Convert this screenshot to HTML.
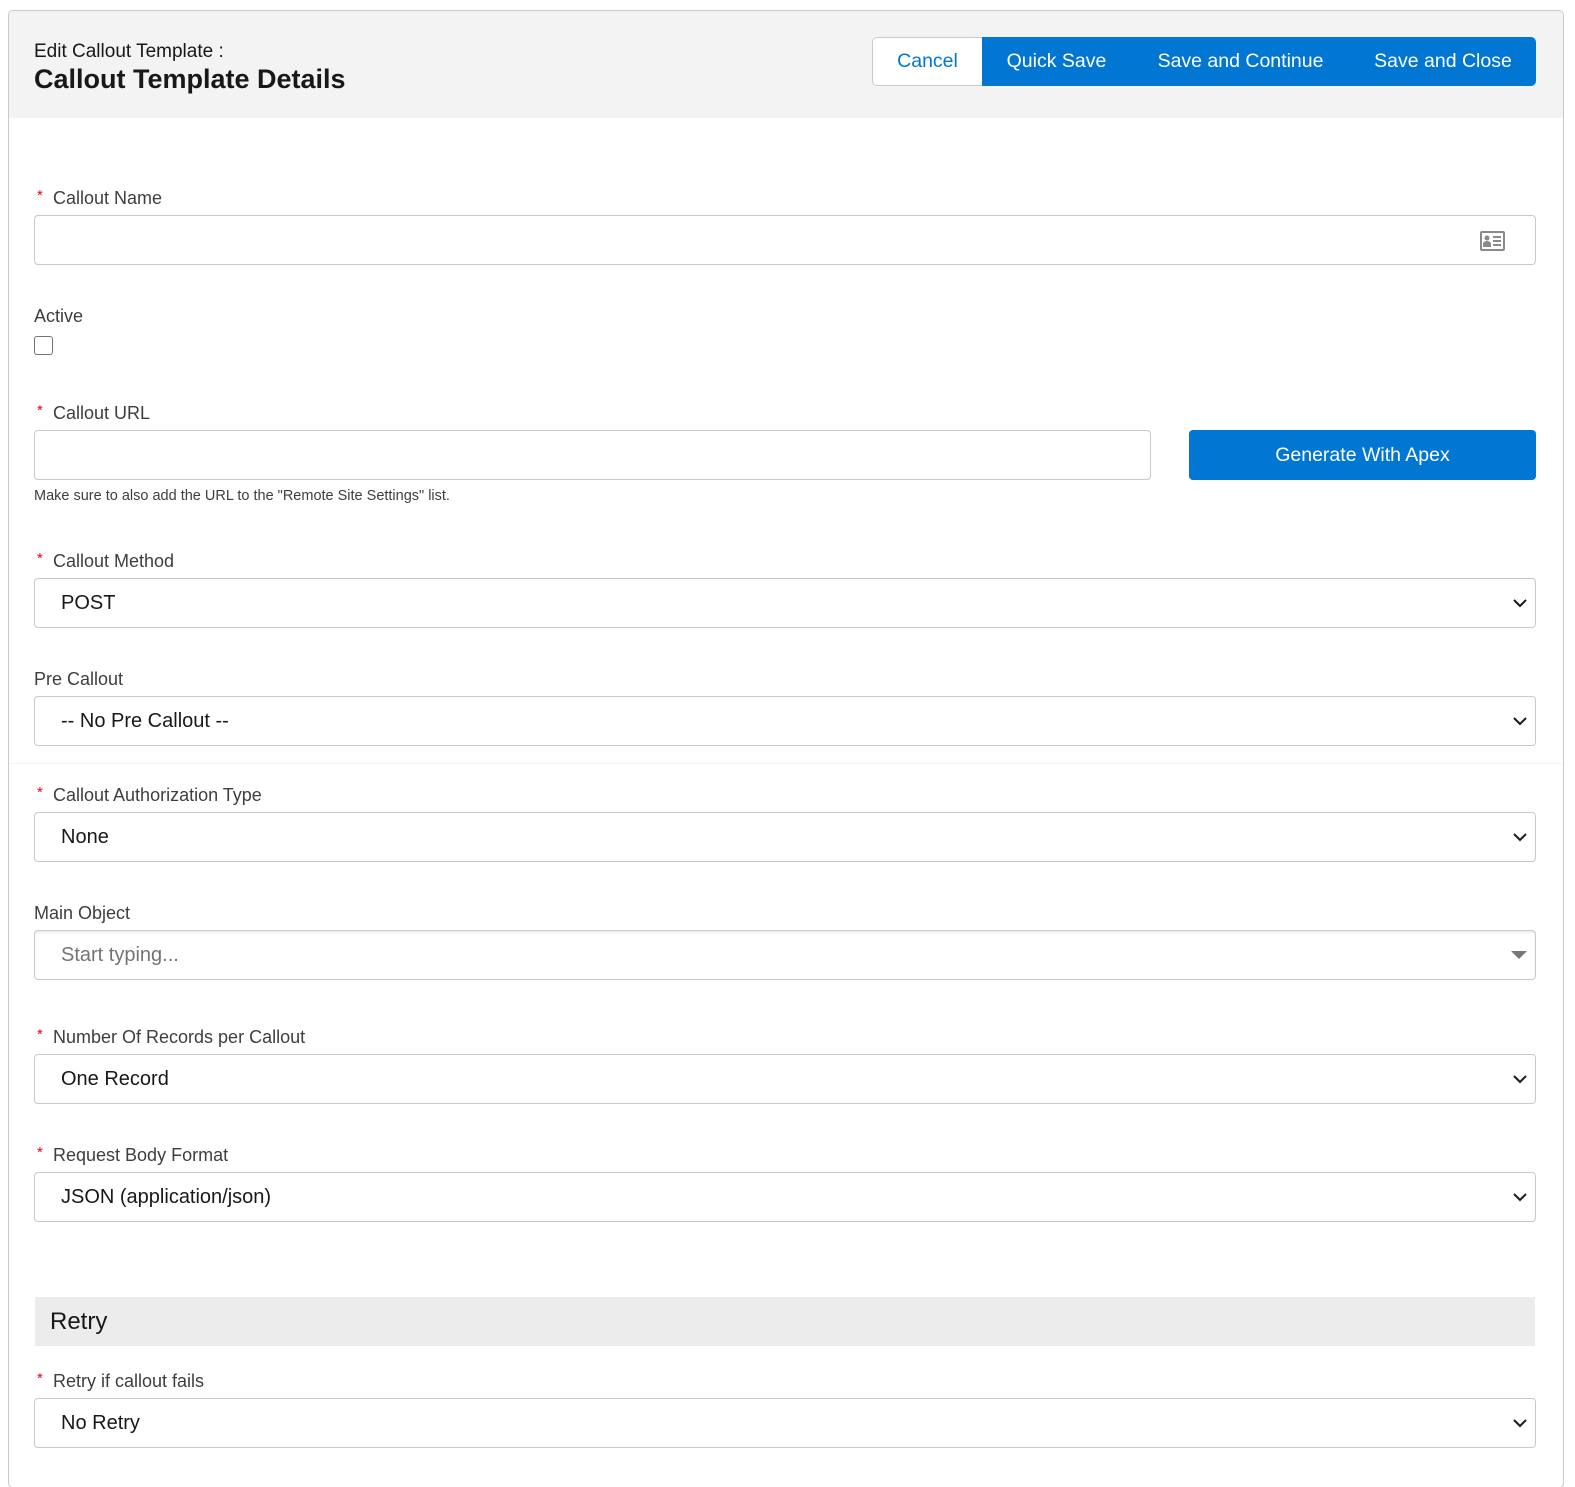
<!DOCTYPE html>
<html style="width:1575px;height:1487px;overflow:hidden"><head><meta charset="utf-8"><style>
*{box-sizing:border-box;margin:0;padding:0}
body{width:1575px;height:1487px;background:#fff;font-family:"Liberation Sans",sans-serif;color:#3e3e3c;position:relative;overflow:hidden}
.card{position:absolute;left:8px;top:10px;width:1556px;height:1478px;border:1px solid #c9c9c9;border-radius:5px;overflow:hidden}
.hdr{position:absolute;left:0;top:0;width:100%;height:107px;background:#f3f3f3}
.a{position:absolute}
.lbl{position:absolute;left:34px;font-size:18px;color:#3e3e3c;line-height:22px}
.lbl i{font-style:normal;color:#ea001e;font-size:15px;position:absolute;left:3px;top:-2px}
.lbl.r{padding-left:19px}
.inp{position:absolute;left:34px;width:1502px;height:50px;border:1px solid #c9c9c9;border-radius:4px;background:#fff}
.sel{font-size:20px;color:#181818;line-height:48px;padding-left:26px}
.chev{position:absolute;right:8px;top:17px}
.btn{position:absolute;top:37px;height:49px;line-height:49px;font-size:19.5px;text-align:center;color:#fff;background:#0176d3}
</style></head><body>
<div class="card">
<div class="hdr"></div>
</div>
<div class="a" style="left:34px;top:41px;font-size:19px;color:#181818">Edit Callout Template :</div>
<div class="a" style="left:34px;top:64px;font-size:27px;font-weight:bold;color:#181818">Callout Template Details</div>
<div class="btn" style="left:872px;width:110px;background:#fff;color:#0176d3;border:1px solid #c9c9c9;border-right:none;border-radius:5px 0 0 5px;line-height:47px">Cancel</div>
<div class="btn" style="left:982px;width:149px">Quick Save</div>
<div class="btn" style="left:1131px;width:219px">Save and Continue</div>
<div class="btn" style="left:1350px;width:186px;border-radius:0 5px 5px 0">Save and Close</div>

<div class="lbl r" style="top:187px"><i>*</i>Callout Name</div>
<div class="inp" style="top:215px"><svg class="a" style="right:30px;top:15px" width="25" height="20" viewBox="0 0 25 20"><rect x="0" y="0" width="25" height="20" rx="2" fill="#8a8a8a"/><rect x="2" y="2" width="21" height="16" fill="#fff"/><circle cx="7" cy="7" r="2.5" fill="#8a8a8a"/><path d="M3 16v-3c0-2 2-3 4-3s4 1 4 3v3z" fill="#8a8a8a"/><rect x="13" y="5" width="8" height="2" fill="#8a8a8a"/><rect x="13" y="9" width="8" height="2" fill="#8a8a8a"/><rect x="13" y="13" width="8" height="2" fill="#8a8a8a"/></svg></div>

<div class="lbl" style="top:305px">Active</div>
<div class="a" style="left:34px;top:336px;width:19px;height:19px;border:1.5px solid #747474;border-radius:3px"></div>

<div class="lbl r" style="top:402px"><i>*</i>Callout URL</div>
<div class="inp" style="top:430px;width:1117px"></div>
<div class="a" style="left:1189px;top:430px;width:347px;height:50px;background:#0176d3;border-radius:4px;color:#fff;font-size:19.5px;text-align:center;line-height:50px">Generate With Apex</div>
<div class="a" style="left:34px;top:488px;font-size:14.5px;color:#3e3e3c">Make sure to also add the URL to the "Remote Site Settings" list.</div>

<div class="lbl r" style="top:550px"><i>*</i>Callout Method</div>
<div class="inp sel" style="top:578px">POST<svg class="chev" width="14" height="14" viewBox="0 0 14 14"><path d="M1 4l6 6 6-6" stroke="#181818" stroke-width="2" fill="none"/></svg></div>

<div class="lbl" style="top:668px">Pre Callout</div>
<div class="inp sel" style="top:696px">-- No Pre Callout --<svg class="chev" width="14" height="14" viewBox="0 0 14 14"><path d="M1 4l6 6 6-6" stroke="#181818" stroke-width="2" fill="none"/></svg></div>

<div class="a" style="left:9px;top:763px;width:1553px;height:1px;background:#f1f1f1"></div>

<div class="lbl r" style="top:784px"><i>*</i>Callout Authorization Type</div>
<div class="inp sel" style="top:812px">None<svg class="chev" width="14" height="14" viewBox="0 0 14 14"><path d="M1 4l6 6 6-6" stroke="#181818" stroke-width="2" fill="none"/></svg></div>

<div class="lbl" style="top:902px">Main Object</div>
<div class="inp sel" style="top:930px;color:#747474;box-shadow:inset 0 2px 2px #eee">Start typing...<svg class="a" style="right:8px;top:20px" width="16" height="9" viewBox="0 0 16 9"><path d="M0 0h16L8 8z" fill="#777"/></svg></div>

<div class="lbl r" style="top:1026px"><i>*</i>Number Of Records per Callout</div>
<div class="inp sel" style="top:1054px">One Record<svg class="chev" width="14" height="14" viewBox="0 0 14 14"><path d="M1 4l6 6 6-6" stroke="#181818" stroke-width="2" fill="none"/></svg></div>

<div class="lbl r" style="top:1144px"><i>*</i>Request Body Format</div>
<div class="inp sel" style="top:1172px">JSON (application/json)<svg class="chev" width="14" height="14" viewBox="0 0 14 14"><path d="M1 4l6 6 6-6" stroke="#181818" stroke-width="2" fill="none"/></svg></div>

<div class="a" style="left:35px;top:1297px;width:1500px;height:49px;background:#ececec;font-size:24px;color:#181818;line-height:49px;padding-left:15px">Retry</div>

<div class="lbl r" style="top:1370px"><i>*</i>Retry if callout fails</div>
<div class="inp sel" style="top:1398px">No Retry<svg class="chev" width="14" height="14" viewBox="0 0 14 14"><path d="M1 4l6 6 6-6" stroke="#181818" stroke-width="2" fill="none"/></svg></div>
</body></html>
